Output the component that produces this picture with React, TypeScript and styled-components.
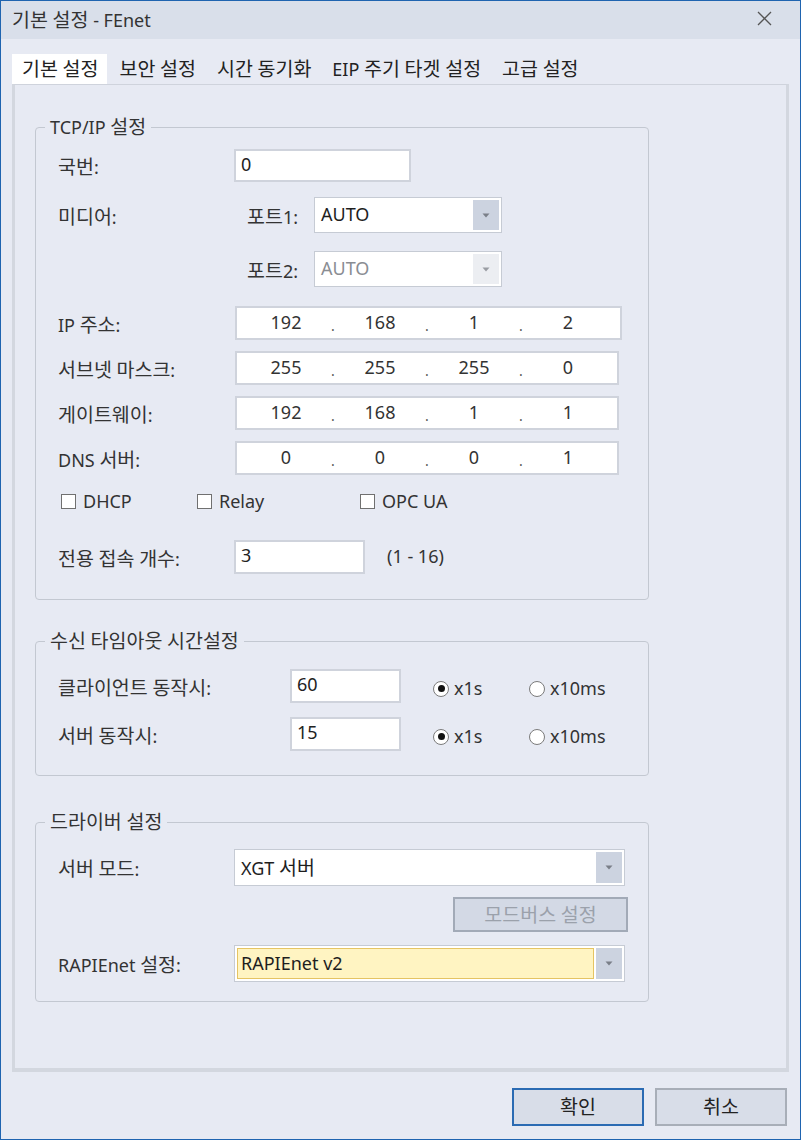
import React from 'react';
import styled, { createGlobalStyle } from 'styled-components';

const GlobalStyle = createGlobalStyle`
  html, body {
    margin: 0;
    padding: 0;
    background: #e7eaf3;
  }
  * {
    box-sizing: border-box;
  }
  body {
    font-family: "Noto Sans", "Noto Sans CJK KR", sans-serif;
    font-size: 18px;
    line-height: 1.2;
    color: #2f2f2f;
  }
`;

const Ko = styled.span`
  font-size: 19.5px;
`;

const Txt = ({ children }: { children: string }) => (
  <span>
    {children.split(/([가-힣]+)/).map((s, i) => (i % 2 ? <Ko key={i}>{s}</Ko> : s))}
  </span>
);

const Window = styled.div`
  width: 801px;
  height: 1140px;
  border: 1px solid #1f64b0;
  background: #e7eaf3;
  display: flex;
  flex-direction: column;
`;

const TitleBar = styled.div`
  flex: none;
  height: 38px;
  background: #d9dfea;
  display: flex;
  align-items: center;
  justify-content: space-between;
  padding: 0 28px 0 11px;
  color: #333;
`;

const CloseIcon = styled.svg`
  width: 15px;
  height: 15px;
  margin-top: -4px;
`;

const Body = styled.div`
  flex: 1;
  display: flex;
  flex-direction: column;
  padding: 0 11px;
`;

const TabStrip = styled.div`
  display: flex;
  gap: 2px;
  margin-top: 15px;
  height: 30px;
`;

const Tab = styled.div<{ $active?: boolean }>`
  display: flex;
  align-items: center;
  padding: 0 9px 0 10px;
  height: 30px;
  white-space: nowrap;
  color: #222;
  background: ${p => (p.$active ? '#ffffff' : 'transparent')};
`;

const TabPanel = styled.div`
  height: 988px;
  border-top: 1px solid #cfd3dc;
  border-left: 3px solid #d3d7df;
  border-right: 3px solid #d3d7df;
  border-bottom: 4px solid #d3d7df;
  padding-left: 20px;
  display: flex;
  flex-direction: column;
`;

const Group = styled.fieldset<{ $mt: number }>`
  width: 614px;
  margin: ${p => p.$mt}px 0 0 0;
  padding: 0;
  min-inline-size: 0;
  border: 1px solid #c3c8d1;
  border-radius: 4px;
`;

const Legend = styled.legend`
  margin-left: 9px;
  padding: 0 5px;
  line-height: 20px;
  color: #333;
`;

const GroupBody = styled.div<{ $pt: number; $pb: number }>`
  padding: ${p => p.$pt}px 0 ${p => p.$pb}px 22px;
  display: flex;
  flex-direction: column;
`;

const Row = styled.div<{ $mt?: number; $h: number; $end?: boolean }>`
  display: flex;
  align-items: center;
  height: ${p => p.$h}px;
  margin-top: ${p => p.$mt ?? 0}px;
  justify-content: ${p => (p.$end ? 'flex-end' : 'flex-start')};
  width: ${p => (p.$end ? '570px' : 'auto')};
`;

const Label = styled.div<{ $w: number }>`
  flex: none;
  width: ${p => p.$w}px;
  white-space: nowrap;
  color: #333;
  padding-top: 3px;
`;

const SubLabel = styled.div`
  flex: none;
  width: 80px;
  padding: 3px 0 0 13px;
  white-space: nowrap;
  color: #333;
`;

const TextInput = styled.div<{ $w: number }>`
  flex: none;
  width: ${p => p.$w}px;
  height: 100%;
  background: #ffffff;
  border: 2px solid #cfd3dc;
  padding: 3px 0 0 5px;
  color: #222;
`;

const IpBox = styled.div<{ $w: number }>`
  flex: none;
  width: ${p => p.$w}px;
  height: 100%;
  background: #ffffff;
  border: 2px solid #cfd3dc;
  padding-left: 8px;
  display: grid;
  grid-template-columns: 82px 12px 82px 12px 82px 12px 82px;
  align-items: center;
  color: #333;
`;

const Octet = styled.span`
  text-align: center;
`;

const Dot = styled.span`
  text-align: center;
  font-size: 14px;
  padding-top: 6px;
  color: #555;
`;

const SelectBox = styled.div<{ $w: number }>`
  flex: none;
  display: flex;
  width: ${p => p.$w}px;
  height: 100%;
  background: #ffffff;
  border: 1px solid #c6cbd4;
  padding: 2px;
  gap: 2px;
`;

const SelectValue = styled.div<{ $disabled?: boolean; $highlight?: boolean }>`
  flex: 1;
  display: flex;
  align-items: center;
  padding-left: 3px;
  white-space: pre;
  color: ${p => (p.$disabled ? '#8a8d93' : '#1e1e1e')};
  background: ${p => (p.$highlight ? '#fff4c2' : 'transparent')};
  border: 1px solid ${p => (p.$highlight ? '#e5c463' : 'transparent')};
`;

const ArrowBox = styled.div<{ $disabled?: boolean }>`
  flex: none;
  width: 26px;
  display: flex;
  align-items: center;
  justify-content: center;
  background: ${p => (p.$disabled ? '#eceef2' : '#ccd3e0')};
`;

const Arrow = styled.svg`
  width: 8px;
  height: 5px;
`;

const CheckRow = styled.div`
  display: grid;
  grid-template-columns: 136px 163px auto;
  padding-left: 3px;
  height: 100%;
  align-items: center;
`;

const CheckItem = styled.label`
  display: flex;
  align-items: center;
  gap: 7px;
  color: #333;
`;

const Box = styled.span`
  width: 15px;
  height: 15px;
  background: #ffffff;
  border: 1px solid #707070;
`;

const Note = styled.div`
  margin-left: 22px;
  color: #333;
`;

const RadioItem = styled.label<{ $ml?: number }>`
  flex: none;
  width: 96px;
  margin-left: ${p => p.$ml ?? 0}px;
  padding-top: 5px;
  display: flex;
  align-items: center;
  gap: 5px;
  color: #333;
`;

const Circle = styled.span<{ $on?: boolean }>`
  width: 16px;
  height: 16px;
  border-radius: 50%;
  border: 1px solid #7b7b7b;
  background: #ffffff;
  display: flex;
  align-items: center;
  justify-content: center;

  &::after {
    content: '';
    width: 7px;
    height: 7px;
    border-radius: 50%;
    background: ${p => (p.$on ? '#111' : 'transparent')};
  }
`;

const GrayButton = styled.div`
  width: 175px;
  height: 100%;
  display: flex;
  align-items: center;
  justify-content: center;
  background: #d3d9e5;
  border: 2px solid #a2aab7;
  color: #9ba1ab;
`;

const Footer = styled.div`
  display: flex;
  justify-content: flex-end;
  gap: 11px;
  padding: 16px 2px 0 0;
`;

const DialogButton = styled.div<{ $primary?: boolean }>`
  width: 132px;
  height: 38px;
  display: flex;
  align-items: center;
  justify-content: center;
  background: #d8dde8;
  border: 2px solid ${p => (p.$primary ? '#2b6bb3' : '#a8aeb8')};
  color: #222;
`;

const Select = ({ w, value, disabled, highlight }: { w: number; value: string; disabled?: boolean; highlight?: boolean }) => (
  <SelectBox $w={w}>
    <SelectValue $disabled={disabled} $highlight={highlight}><Txt>{value}</Txt></SelectValue>
    <ArrowBox $disabled={disabled}>
      <Arrow viewBox="0 0 8 5">
        <path d="M0.5 0.5 L7.5 0.5 L4 4.5 Z" fill={disabled ? '#9a9da3' : '#7a7f88'} />
      </Arrow>
    </ArrowBox>
  </SelectBox>
);

const Ip = ({ w, parts }: { w: number; parts: string[] }) => (
  <IpBox $w={w}>
    {parts.map((p, i) => (
      <React.Fragment key={i}>
        {i > 0 && <Dot>.</Dot>}
        <Octet>{p}</Octet>
      </React.Fragment>
    ))}
  </IpBox>
);

const tabs = ['기본 설정', '보안 설정', '시간 동기화', 'EIP 주기 타겟 설정', '고급 설정'];

const ipRows = [
  { label: 'IP 주소:', w: 387, parts: ['192', '168', '1', '2'], mt: 19 },
  { label: '서브넷 마스크:', w: 384, parts: ['255', '255', '255', '0'], mt: 11 },
  { label: '게이트웨이:', w: 384, parts: ['192', '168', '1', '1'], mt: 11 },
  { label: 'DNS 서버:', w: 384, parts: ['0', '0', '0', '1'], mt: 11 },
];

const timeoutRows = [
  { label: '클라이언트 동작시:', value: '60', mt: 0 },
  { label: '서버 동작시:', value: '15', mt: 14 },
];

export default function App() {
  return (
    <>
      <GlobalStyle />
      <Window>
        <TitleBar>
          <Txt>기본 설정 - FEnet</Txt>
          <CloseIcon viewBox="0 0 15 15">
            <path d="M1 1 L14 14 M14 1 L1 14" stroke="#555" strokeWidth="1.3" fill="none" />
          </CloseIcon>
        </TitleBar>
        <Body>
          <TabStrip>
            {tabs.map((t, i) => (
              <Tab key={t} $active={i === 0}><Txt>{t}</Txt></Tab>
            ))}
          </TabStrip>
          <TabPanel>
            <Group $mt={32}>
              <Legend><Txt>TCP/IP 설정</Txt></Legend>
              <GroupBody $pt={12} $pb={25}>
                <Row $h={33}>
                  <Label $w={176}><Txt>국번:</Txt></Label>
                  <TextInput $w={177}>0</TextInput>
                </Row>
                <Row $mt={15} $h={36}>
                  <Label $w={176}><Txt>미디어:</Txt></Label>
                  <SubLabel><Txt>포트1:</Txt></SubLabel>
                  <Select w={188} value="AUTO" />
                </Row>
                <Row $mt={18} $h={36}>
                  <Label $w={176}></Label>
                  <SubLabel><Txt>포트2:</Txt></SubLabel>
                  <Select w={188} value="AUTO" disabled />
                </Row>
                {ipRows.map(r => (
                  <Row key={r.label} $mt={r.mt} $h={34}>
                    <Label $w={177}><Txt>{r.label}</Txt></Label>
                    <Ip w={r.w} parts={r.parts} />
                  </Row>
                ))}
                <Row $mt={16} $h={20}>
                  <CheckRow>
                    <CheckItem><Box />DHCP</CheckItem>
                    <CheckItem><Box />Relay</CheckItem>
                    <CheckItem><Box />OPC UA</CheckItem>
                  </CheckRow>
                </Row>
                <Row $mt={29} $h={34}>
                  <Label $w={176}><Txt>전용 접속 개수:</Txt></Label>
                  <TextInput $w={131}>3</TextInput>
                  <Note>(1 - 16)</Note>
                </Row>
              </GroupBody>
            </Group>

            <Group $mt={31}>
              <Legend><Txt>수신 타임아웃 시간설정</Txt></Legend>
              <GroupBody $pt={18} $pb={24}>
                {timeoutRows.map(r => (
                  <Row key={r.label} $mt={r.mt} $h={34}>
                    <Label $w={232}><Txt>{r.label}</Txt></Label>
                    <TextInput $w={111}>{r.value}</TextInput>
                    <RadioItem $ml={32}><Circle $on />x1s</RadioItem>
                    <RadioItem><Circle />x10ms</RadioItem>
                  </Row>
                ))}
              </GroupBody>
            </Group>

            <Group $mt={36}>
              <Legend><Txt>드라이버 설정</Txt></Legend>
              <GroupBody $pt={17} $pb={19}>
                <Row $h={37}>
                  <Label $w={176}><Txt>서버 모드:</Txt></Label>
                  <Select w={391} value="XGT 서버" />
                </Row>
                <Row $mt={11} $h={35} $end>
                  <GrayButton><Txt>모드버스 설정</Txt></GrayButton>
                </Row>
                <Row $mt={13} $h={37}>
                  <Label $w={176}><Txt>RAPIEnet 설정:</Txt></Label>
                  <Select w={391} value="RAPIEnet v2" highlight />
                </Row>
              </GroupBody>
            </Group>
          </TabPanel>
          <Footer>
            <DialogButton $primary><Txt>확인</Txt></DialogButton>
            <DialogButton><Txt>취소</Txt></DialogButton>
          </Footer>
        </Body>
      </Window>
    </>
  );
}
